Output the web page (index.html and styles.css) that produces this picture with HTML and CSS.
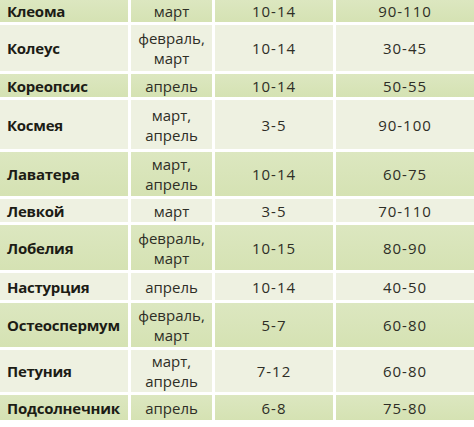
FILE: index.html
```html
<!DOCTYPE html>
<html lang="ru">
<head>
<meta charset="utf-8">
<title>Таблица посева</title>
<link rel="stylesheet" href="styles.css">
</head>
<body>
<div class="table">
  <div class="cell name dark">Клеома</div><div class="cell month dark">март</div><div class="cell num dark">10-14</div><div class="cell num dark">90-110</div>
  <div class="cell name light">Колеус</div><div class="cell month light">февраль,<br>март</div><div class="cell num light">10-14</div><div class="cell num light">30-45</div>
  <div class="cell name dark">Кореопсис</div><div class="cell month dark">апрель</div><div class="cell num dark">10-14</div><div class="cell num dark">50-55</div>
  <div class="cell name light">Космея</div><div class="cell month light">март,<br>апрель</div><div class="cell num light">3-5</div><div class="cell num light">90-100</div>
  <div class="cell name dark">Лаватера</div><div class="cell month dark">март,<br>апрель</div><div class="cell num dark">10-14</div><div class="cell num dark">60-75</div>
  <div class="cell name light">Левкой</div><div class="cell month light">март</div><div class="cell num light">3-5</div><div class="cell num light">70-110</div>
  <div class="cell name dark">Лобелия</div><div class="cell month dark">февраль,<br>март</div><div class="cell num dark">10-15</div><div class="cell num dark">80-90</div>
  <div class="cell name light">Настурция</div><div class="cell month light">апрель</div><div class="cell num light">10-14</div><div class="cell num light">40-50</div>
  <div class="cell name dark">Остеоспермум</div><div class="cell month dark">февраль,<br>март</div><div class="cell num dark">5-7</div><div class="cell num dark">60-80</div>
  <div class="cell name light">Петуния</div><div class="cell month light">март,<br>апрель</div><div class="cell num light">7-12</div><div class="cell num light">60-80</div>
  <div class="cell name dark">Подсолнечник</div><div class="cell month dark">апрель</div><div class="cell num dark">6-8</div><div class="cell num dark">75-80</div>
</div>
</body>
</html>
```
FILE: styles.css
```css
html, body {
  margin: 0;
  padding: 0;
  background: #ffffff;
}
body {
  font-family: "Open Sans", "DejaVu Sans", sans-serif;
  color: #26261e;
}
.table {
  display: grid;
  grid-template-columns: 128px 81px 118px 138px;
  grid-template-rows: 22px 46px 23px 49px 44px 23px 45px 27px 44px 42px 25px;
  gap: 3px;
  width: 474px;
}
.cell {
  display: flex;
  align-items: center;
  font-size: 15px;
  line-height: 20px;
}
.dark {
  background: linear-gradient(180deg, #dce7c0 0%, #d5e2b3 100%);
}
.light {
  background: #eef1e1;
}
.name {
  font-weight: 700;
  padding-left: 7px;
  color: #1c1c15;
  letter-spacing: -0.25px;
}
.month {
  justify-content: center;
  text-align: center;
  color: #2e2e26;
}
.num {
  justify-content: center;
  letter-spacing: 1px;
  color: #2e2e26;
}
```
